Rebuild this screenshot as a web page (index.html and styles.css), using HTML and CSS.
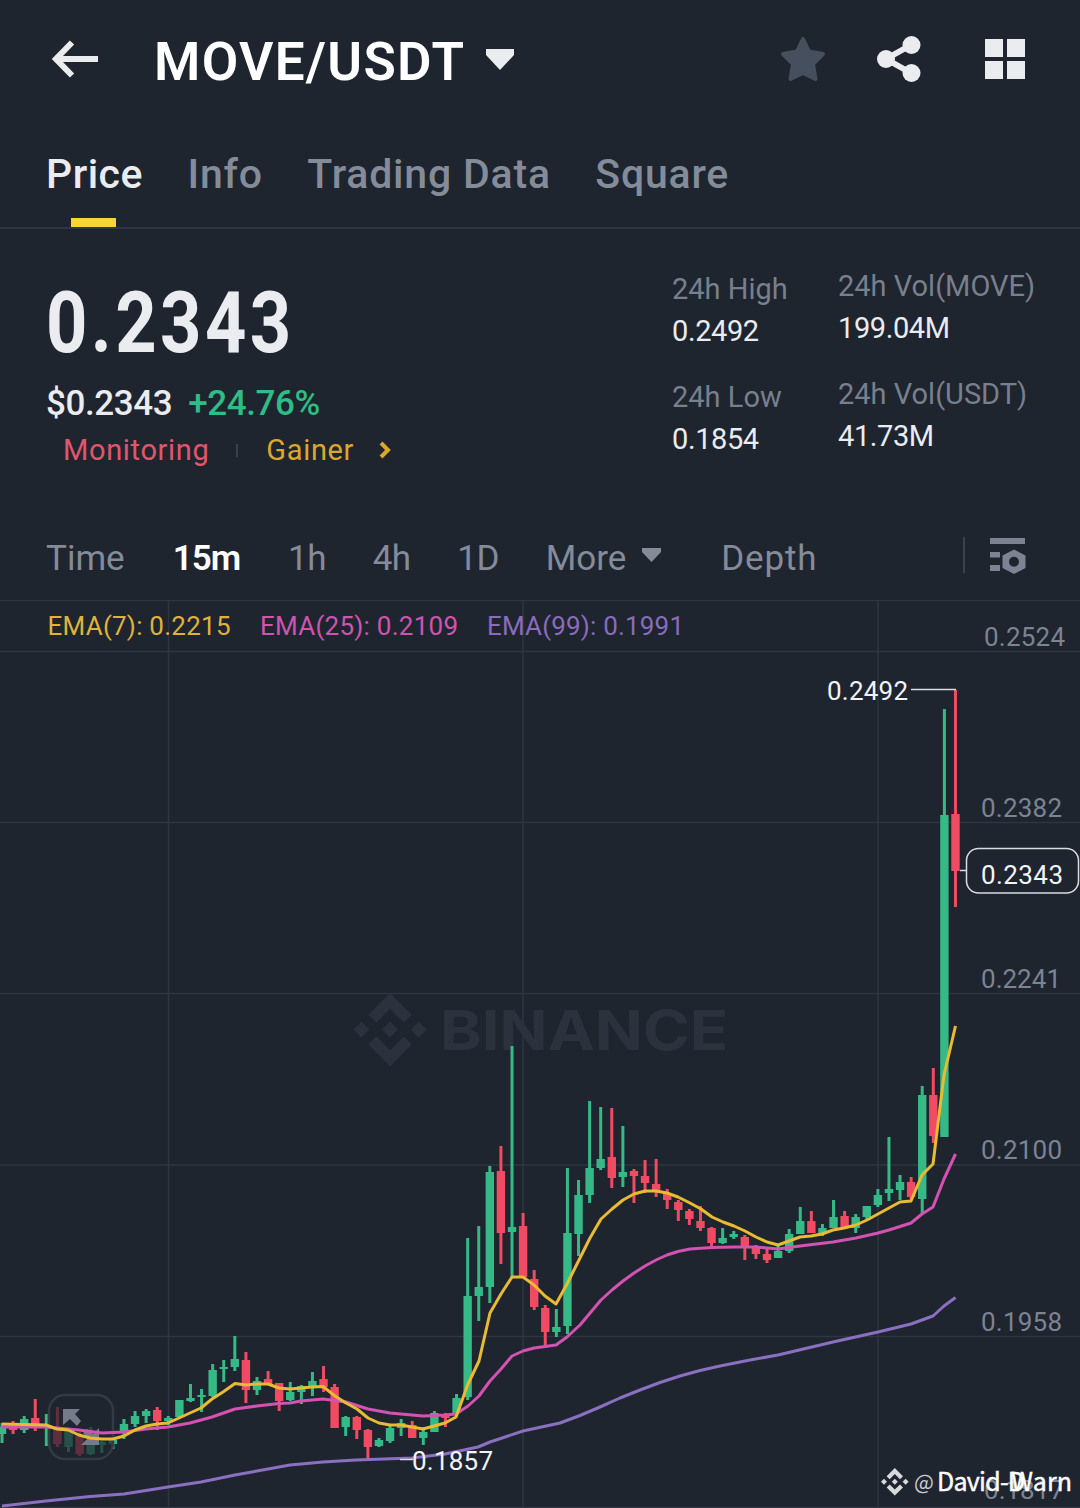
FILE: index.html
```html
<!DOCTYPE html>
<html lang="en">
<head>
    <meta charset="UTF-8">
    <meta name="viewport" content="width=device-width, initial-scale=1.0">
    <title>MOVE/USDT</title>
    <link rel="stylesheet" href="styles.css">
</head>
<body>
    <header class="topbar">
        <svg class="back" width="46" height="38" viewBox="0 0 46 38">
            <path d="M20 2.500L4 19L20 35.500M4 19H46" fill="none" stroke="#eaecf0" stroke-width="6"/>
        </svg>
        <h1 class="pair">MOVE/USDT</h1>
        <svg class="pair-arrow" width="28" height="22" viewBox="0 0 28 22">
            <path d="M0 0H28V6L14 21L0 6Z" fill="#eaecf0"/>
        </svg>
        <div class="actions">
            <svg width="46" height="46" viewBox="0 0 46 46">
                <path d="M23 3L29 15.500L43 18L33 28L35.500 43L23 37L10.500 43L13 28L3 18L17 15.500Z" fill="#464f5e" stroke="#464f5e" stroke-width="4" stroke-linejoin="round"/>
            </svg>
            <svg class="share" width="44" height="46" viewBox="0 0 44 46">
                <path d="M34 9L9 23L34 37" fill="none" stroke="#eaecf0" stroke-width="6"/>
                <circle cx="34.500" cy="9" r="9" fill="#eaecf0"/>
                <circle cx="9" cy="23" r="9" fill="#eaecf0"/>
                <circle cx="34.500" cy="37" r="9" fill="#eaecf0"/>
            </svg>
            <svg class="grid" width="40" height="40" viewBox="0 0 40 40">
                <path d="M0 0H18V18H0ZM22 0H40V18H22ZM0 22H18V40H0ZM22 22H40V40H22Z" fill="#eaecf0"/>
            </svg>
        </div>
    </header>

    <nav class="tabs">
        <a class="tab active">Price</a>
        <a class="tab">Info</a>
        <a class="tab trading">Trading Data</a>
        <a class="tab">Square</a>
    </nav>

    <section class="summary">
        <div class="price-box">
            <div class="price">0.2343</div>
            <div class="fiat"><span class="usd">$0.2343</span><span class="change">+24.76%</span></div>
            <div class="tags">
                <span class="monitoring">Monitoring</span>
                <i class="tag-line"></i>
                <span class="gainer">Gainer</span>
                <svg width="12" height="18" viewBox="0 0 12 18">
                    <path d="M2 2L9 9L2 16" fill="none" stroke="#dba92a" stroke-width="4"/>
                </svg>
            </div>
        </div>
        <div class="stats">
            <div class="stat"><span class="label">24h High</span><span class="value">0.2492</span></div>
            <div class="stat"><span class="label">24h Low</span><span class="value">0.1854</span></div>
        </div>
        <div class="stats volume">
            <div class="stat"><span class="label">24h Vol(MOVE)</span><span class="value">199.04M</span></div>
            <div class="stat"><span class="label">24h Vol(USDT)</span><span class="value">41.73M</span></div>
        </div>
    </section>

    <nav class="intervals">
        <span class="time">Time</span>
        <span class="selected">15m</span>
        <span class="short">1h</span>
        <span class="short">4h</span>
        <span class="short">1D</span>
        <span class="more">More</span>
        <svg class="more-arrow" width="19" height="14" viewBox="0 0 19 14">
            <path d="M0 0H19V4L9.500 14L0 4Z" fill="#848b99"/>
        </svg>
        <span class="depth">Depth</span>
        <i class="interval-line"></i>
        <svg class="settings" width="36" height="37" viewBox="0 0 36 37">
            <path d="M0 1H35V7H0ZM0 15H10V20.500H0ZM0 28H10V34H0Z" fill="#7c8392"/>
            <path fill-rule="evenodd" d="M24 12.500L35.500 18.500V31L24 37L12.500 31V18.500ZM24 19.700A5 5 0 1 0 24 29.700A5 5 0 1 0 24 19.700Z" fill="#7c8392"/>
        </svg>
    </nav>

    <main class="chart">
        <svg class="plot" width="1080" height="908" viewBox="0 600 1080 908">
            <g class="grid-lines">
                <path d="M0 600.500H1080M0 651.500H1080M0 822.500H1080M0 993.500H1080M0 1165H1080M0 1336.500H1080M0 1507.500H1080"/>
                <path d="M168.500 600V1508M523 600V1508M878 600V1508"/>
            </g>

            <g class="watermark">
                <g transform="translate(353.500 993) scale(3.050)">
                    <path d="M12 0L19.100 7.100L16.500 9.700L12 5.200L7.500 9.700L4.900 7.100ZM0 12L2.600 9.400L5.200 12L2.600 14.600ZM12 9.400L14.600 12L12 14.600L9.400 12ZM18.800 12L21.400 9.400L24 12L21.400 14.600ZM4.900 16.900L7.500 14.300L12 18.800L16.500 14.300L19.100 16.900L12 24Z"/>
                </g>
                <text x="440" y="1050" textLength="288" lengthAdjust="spacingAndGlyphs">BINANCE</text>
            </g>

            <g id="candles"></g>

            <g class="expand">
                <rect x="49" y="1395" width="64" height="64" rx="16"/>
                <path d="M63 1409H80L75 1414L81 1421L77 1426L70 1419L63 1425ZM99 1428V1445H81L88 1438L83 1433L87 1429L93 1434Z"/>
            </g>

            <g id="averages"></g>

            <g class="legend">
                <text class="ema7" x="47.500" y="635" textLength="183">EMA(7): 0.2215</text>
                <text class="ema25" x="260" y="635" textLength="198">EMA(25): 0.2109</text>
                <text class="ema99" x="487" y="635" textLength="197">EMA(99): 0.1991</text>
            </g>

            <g class="axis">
                <text x="984" y="646" textLength="81">0.2524</text>
                <text x="981" y="817" textLength="81">0.2382</text>
                <text x="981" y="988" textLength="80">0.2241</text>
                <text x="981" y="1159" textLength="81">0.2100</text>
                <text x="981" y="1331" textLength="81">0.1958</text>
                <text x="984" y="1499" textLength="80">0.1817</text>
            </g>

            <g class="marks">
                <path d="M911 689.500H956M400 1459.500H413M960 870.500H967"/>
                <text x="827" y="700" textLength="81">0.2492</text>
                <text x="412" y="1470" textLength="81">0.1857</text>
                <rect x="966.500" y="848.500" width="112" height="44.500" rx="12"/>
                <text x="981" y="884" textLength="82">0.2343</text>
            </g>

            <g class="author">
                <g transform="translate(881 1468) scale(1.150)">
                    <path d="M12 0L19.100 7.100L16.500 9.700L12 5.200L7.500 9.700L4.900 7.100ZM0 12L2.600 9.400L5.200 12L2.600 14.600ZM12 9.400L14.600 12L12 14.600L9.400 12ZM18.800 12L21.400 9.400L24 12L21.400 14.600ZM4.900 16.900L7.500 14.300L12 18.800L16.500 14.300L19.100 16.900L12 24Z"/>
                </g>
                <text class="at" x="914" y="1490" textLength="20">@</text>
                <text x="937" y="1491" textLength="88">David-D</text>
                <text x="1011" y="1491" textLength="61">Warn</text>
            </g>
        </svg>
    </main>

    <script src="chart.js"></script>
</body>
</html>
```
FILE: styles.css
```css
body {
    margin: 0;
    width: 1080px;
    height: 1508px;
    overflow: hidden;
    background-color: #1f252f;
    color: #eaecf0;
    font-family: Roboto, "Liberation Sans", sans-serif;
}

svg {
    display: block;
    flex: none;
}

.topbar {
    display: flex;
    align-items: center;
    height: 120px;
    padding: 0 55px 2px 52px;
    box-sizing: border-box;
}

.pair {
    margin: 5px 0 0 56px;
    width: 312px;
    font-size: 53px;
    font-weight: 600;
    line-height: 60px;
    letter-spacing: 1.3px;
    color: #fff;
    white-space: nowrap;
}

.pair-arrow {
    margin: 2px 0 0 20px;
}

.actions {
    display: flex;
    align-items: center;
    margin-left: auto;
}

.share {
    margin-left: 51px;
}

.grid {
    margin-left: 64px;
}

.tabs {
    display: flex;
    gap: 44.5px;
    height: 109px;
    padding-left: 46px;
    box-sizing: border-box;
    border-bottom: 2px solid #2f3641;
}

.tab {
    position: relative;
    font-size: 41px;
    font-weight: 500;
    line-height: 108px;
    letter-spacing: 0.8px;
    color: #848b99;
    white-space: nowrap;
}

.tab.active {
    color: #eaecf0;
    letter-spacing: 0.5px;
}

.tab.active::after {
    content: "";
    position: absolute;
    left: 25px;
    bottom: 0;
    width: 45px;
    height: 9px;
    background-color: #fcd535;
}

.summary {
    display: flex;
    height: 290px;
    line-height: 42px;
}

.price-box {
    width: 626px;
    padding: 54px 0 0 46px;
}

/* narrow figures with open spacing */
.price {
    font-size: 85px;
    font-weight: 700;
    line-height: 80px;
    letter-spacing: 4px;
    transform: scaleX(0.85);
    transform-origin: left;
}

.fiat {
    display: flex;
    gap: 16px;
    margin-top: 20px;
    font-size: 35px;
    font-weight: 500;
    letter-spacing: -0.4px;
}

.change {
    color: #2ebd85;
}

.tags {
    display: flex;
    align-items: center;
    margin-top: 4px;
    padding-left: 17px;
    font-size: 29px;
    letter-spacing: 0.65px;
}

.monitoring {
    color: #e2566d;
}

.tag-line {
    width: 2px;
    height: 13px;
    margin: 0 28px 0 27px;
    background-color: #3a414d;
}

.gainer {
    margin-right: 25px;
    color: #dba92a;
}

.stats {
    width: 166px;
    padding-top: 39px;
    font-size: 29px;
}

.volume {
    width: 220px;
    padding-top: 36px;
}

.stat {
    display: flex;
    flex-direction: column;
    height: 108px;
    white-space: nowrap;
}

.label {
    color: #787f8d;
}

.value {
    letter-spacing: -0.4px;
}

.intervals {
    display: flex;
    align-items: center;
    height: 81px;
    padding: 0 54px 2px 46px;
    box-sizing: border-box;
    font-size: 35px;
    color: #848b99;
}

.intervals span {
    margin-right: 48px;
    white-space: nowrap;
}

.intervals .selected {
    color: #fff;
    font-weight: 600;
    letter-spacing: -1px;
}

.intervals .short {
    margin-right: 46.7px;
    letter-spacing: -0.5px;
}

.intervals .more {
    margin-right: 16px;
}

.more-arrow {
    margin: -8px 60px 0 0;
}

.intervals .depth {
    letter-spacing: 0.8px;
}

.interval-line {
    width: 2px;
    height: 36px;
    margin: -8px 25px 0 auto;
    background-color: #3a414d;
}

.settings {
    margin-top: -7px;
}

.plot text {
    font-size: 26px;
}

.grid-lines {
    stroke: #2f3641;
    stroke-width: 1.5;
}

.watermark {
    fill: #2b323d;
}

.plot .watermark text {
    font-family: Inter, Roboto, sans-serif;
    font-size: 55px;
    font-weight: 700;
}

.up {
    fill: #35b986;
}

.down {
    fill: #f04b62;
}

#averages polyline {
    fill: none;
    stroke-width: 3;
    stroke-linejoin: round;
}

.expand rect {
    fill: #1f252f;
    fill-opacity: 0.7;
    stroke: #343a44;
    stroke-width: 2.5;
}

.expand path {
    fill: #747b89;
}

.legend .ema7 {
    fill: #dfb33a;
}

.legend .ema25 {
    fill: #cf54ae;
}

.legend .ema99 {
    fill: #8a6bbd;
}

.axis {
    fill: #7c8392;
}

.marks text {
    fill: #f3f4f7;
}

.marks path,
.marks rect {
    fill: none;
    stroke: #d9dce2;
    stroke-width: 1.5;
}

.author {
    fill: #d8d9dc;
}

.plot .author text {
    fill: #fff;
    stroke: #fff;
    stroke-width: 0.4;
    font-family: "Noto Sans CJK SC", "Noto Sans", sans-serif;
    font-size: 25px;
    font-weight: 400;
}

.plot .author .at {
    fill: #c9cbd0;
    stroke: none;
    font-size: 21px;
}
```
FILE: chart.js
```js
const SVG_NS = "http://www.w3.org/2000/svg";

// one row per candle: direction, wick top, body top, body bottom, wick bottom
const candles = [
    ["up", 1423, 1427, 1434, 1443], ["down", 1421, 1425, 1430, 1434], ["up", 1416, 1419, 1430, 1433],
    ["down", 1399, 1418, 1427, 1431], ["up", 1414, 1425, 1427, 1446], ["down", 1407, 1428, 1444, 1447],
    ["up", 1428, 1430, 1447, 1452], ["down", 1432, 1435, 1454, 1456], ["up", 1427, 1445, 1454, 1455],
    ["up", 1441, 1442, 1445, 1453], ["up", 1438, 1440, 1444, 1449], ["up", 1419, 1424, 1433, 1439],
    ["up", 1411, 1416, 1424, 1427], ["up", 1409, 1411, 1416, 1423], ["down", 1407, 1410, 1421, 1430],
    ["up", 1416, 1418, 1421, 1425], ["up", 1400, 1400, 1417, 1417], ["up", 1384, 1398, 1401, 1402],
    ["up", 1389, 1395, 1397, 1412], ["up", 1364, 1370, 1396, 1397], ["up", 1360, 1367, 1369, 1382],
    ["up", 1336, 1359, 1367, 1371], ["down", 1352, 1360, 1390, 1403], ["up", 1377, 1381, 1390, 1395],
    ["down", 1371, 1379, 1384, 1384], ["down", 1383, 1383, 1401, 1411], ["up", 1382, 1392, 1400, 1401],
    ["up", 1385, 1386, 1392, 1404], ["up", 1372, 1381, 1386, 1396], ["down", 1366, 1379, 1387, 1392],
    ["down", 1384, 1387, 1428, 1428], ["up", 1416, 1417, 1427, 1436], ["down", 1416, 1417, 1430, 1439],
    ["down", 1429, 1430, 1447, 1459], ["up", 1438, 1440, 1446, 1447], ["up", 1426, 1428, 1441, 1443],
    ["up", 1419, 1423, 1428, 1436], ["down", 1421, 1425, 1438, 1438], ["up", 1427, 1432, 1438, 1445],
    ["up", 1411, 1413, 1432, 1432], ["down", 1413, 1415, 1418, 1427], ["up", 1394, 1398, 1413, 1413],
    ["up", 1238, 1296, 1397, 1400], ["up", 1226, 1287, 1296, 1321], ["up", 1166, 1172, 1287, 1303],
    ["down", 1146, 1171, 1233, 1264], ["up", 1046, 1227, 1232, 1277], ["down", 1213, 1226, 1277, 1277],
    ["down", 1270, 1279, 1307, 1310], ["down", 1305, 1308, 1332, 1345], ["up", 1309, 1327, 1332, 1337],
    ["up", 1168, 1233, 1326, 1334], ["up", 1180, 1195, 1234, 1256], ["up", 1101, 1168, 1195, 1203],
    ["up", 1107, 1159, 1168, 1170], ["down", 1108, 1157, 1178, 1188], ["up", 1126, 1172, 1177, 1187],
    ["down", 1169, 1171, 1176, 1203], ["down", 1160, 1176, 1183, 1193], ["down", 1159, 1184, 1191, 1197],
    ["down", 1189, 1193, 1200, 1209], ["down", 1200, 1202, 1210, 1221], ["down", 1209, 1211, 1219, 1225],
    ["down", 1206, 1221, 1228, 1231], ["down", 1227, 1228, 1243, 1246], ["up", 1228, 1238, 1243, 1244],
    ["up", 1231, 1234, 1237, 1239], ["down", 1235, 1237, 1248, 1260], ["down", 1245, 1247, 1254, 1259],
    ["down", 1249, 1254, 1260, 1263], ["up", 1245, 1251, 1258, 1258], ["up", 1229, 1234, 1251, 1253],
    ["up", 1207, 1221, 1234, 1234], ["down", 1211, 1221, 1233, 1233], ["up", 1224, 1228, 1233, 1236],
    ["up", 1200, 1217, 1228, 1228], ["down", 1211, 1216, 1228, 1228], ["up", 1214, 1217, 1228, 1233],
    ["up", 1206, 1206, 1217, 1219], ["up", 1189, 1195, 1205, 1207], ["up", 1137, 1189, 1193, 1201],
    ["up", 1175, 1182, 1190, 1200], ["down", 1177, 1182, 1197, 1199], ["up", 1086, 1095, 1199, 1213],
    ["down", 1068, 1095, 1136, 1143], ["up", 709, 815, 1137, 1137], ["down", 690, 814, 871, 907]
];

const averages = [
    {
        color: "#8b6fc0",
        points: "2,1506 46,1501 90,1496.5 124,1494 168,1487 201,1482 235,1475 257,1471 290,1465 323,1462 356,1460 412,1458 445,1454 478,1447 490,1442 523,1431 560,1423 580,1415.5 600,1407 620,1398 640,1390 660,1382.500 680,1376 700,1370.500 720,1366 750,1360 778,1355 833,1342 878,1332 911,1324 933,1316 944,1306 955.5,1297.5"
    },
    {
        color: "#d452b2",
        points: "2,1427 46,1427 57,1428 79,1430 102,1433 124,1432 146,1429 168,1427 190,1423 201,1420 212,1417 235,1409 257,1406 279,1403.5 290,1403 301,1401 323,1399 346,1402 368,1409 390,1413 412,1415 423,1416 445,1415 456,1414 468,1406 479,1396 490,1381 501,1369 512,1356 523,1351 534,1348 556,1345 567,1337 580,1325 601,1300 612,1290 623,1281 634,1273 645,1266 656,1260 667,1255 678,1251.500 690,1249 712,1247.5 734,1247 756,1247 778,1249 800,1246 833,1242 856,1238 878,1233 889,1230 911,1223 922,1214 933,1207 944,1179 955.5,1154"
    },
    {
        color: "#e8bb33",
        points: "2,1424 46,1425 57,1429 68,1430 79,1435 90,1438 102,1439 113,1439 124,1436 135,1430 146,1426 157,1424 168,1423 179,1418 190,1413 201,1408 212,1399 223,1392 235,1383.5 246,1385 257,1384 268,1384 279,1388 290,1389 301,1388 312,1387 323,1386.5 335,1396 346,1403 357,1409 368,1418 379,1423 390,1425 401,1425 412,1427 423,1429 434,1426 445,1423 456,1417 468,1384 479,1361 490,1313 501,1294 512,1277 523,1277 534,1285 545,1296 556,1304 567,1284 580,1258 590,1238 601,1219 612,1209 623,1200 634,1194 645,1191 656,1191 667,1193 678,1197 690,1203 701,1209 712,1217 723,1222 734,1226 745,1231 756,1237 767,1242 778,1245 789,1241 800,1237 811,1236 822,1234 833,1230 844,1228 856,1225 867,1220 878,1214 889,1208 900,1202 911,1201 922,1175 933,1164 944,1075 955.5,1026"
    }
];

function addRect(parent, cls, x, y, width, height) {
    const rect = document.createElementNS(SVG_NS, "rect");
    rect.setAttribute("class", cls);
    rect.setAttribute("x", x);
    rect.setAttribute("y", y);
    rect.setAttribute("width", width);
    rect.setAttribute("height", height);
    parent.appendChild(rect);
}

function drawCandles() {
    const group = document.getElementById("candles");
    candles.forEach(([dir, high, top, bottom, low], i) => {
        const x = 2 + i * 11.087;
        addRect(group, dir, x - 1.5, high, 3, low - high);
        addRect(group, dir, x - 4.2, top, 8.4, bottom - top);
    });
}

function drawAverages() {
    const group = document.getElementById("averages");
    averages.forEach(({ color, points }) => {
        const line = document.createElementNS(SVG_NS, "polyline");
        line.setAttribute("points", points);
        line.setAttribute("stroke", color);
        group.appendChild(line);
    });
}

drawCandles();
drawAverages();
```
